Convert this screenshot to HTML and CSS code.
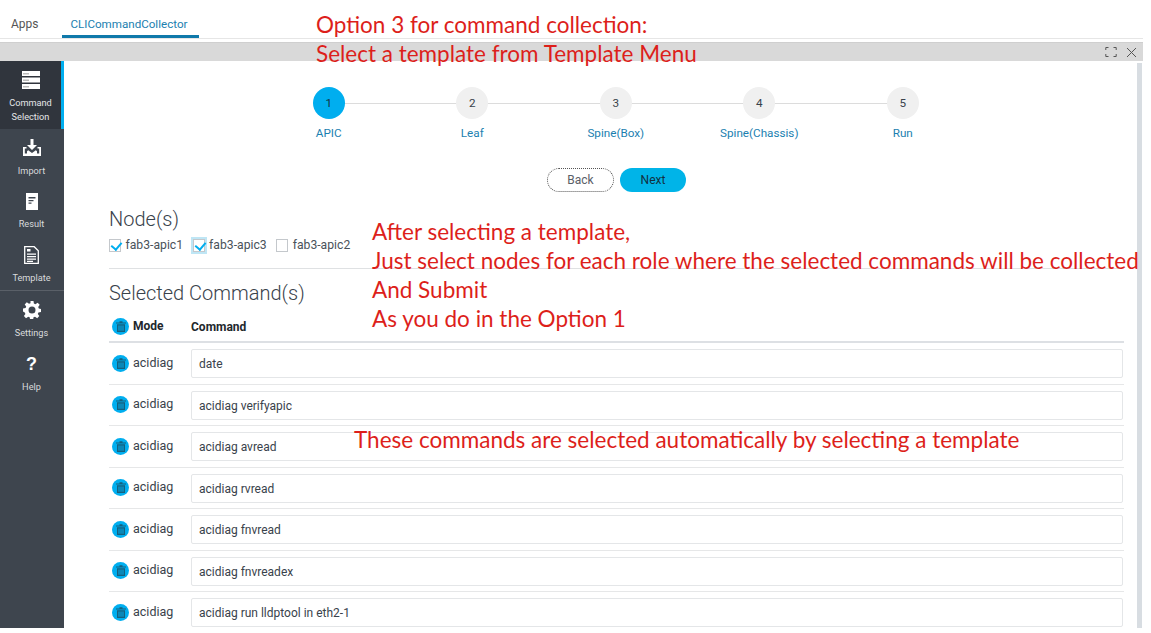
FILE: index.html
```html
<!DOCTYPE html>
<html lang="en">
<head>
<meta charset="utf-8">
<title>CLICommandCollector</title>
<link rel="stylesheet" href="styles.css">
</head>
<body>
<div class="app">
  <nav class="tabs">
    <span class="tab">Apps</span>
    <span class="tab tab-active">CLICommandCollector</span>
  </nav>
  <div class="titlebar">
    <svg class="tb-icon" viewBox="0 0 12 10" width="12" height="10"><path d="M3.5 .5H.8V3M8.5 .5h2.700V3M3.5 9.500H.8V7M8.5 9.500h2.700V7" fill="none" stroke="#555" stroke-width="1"/></svg>
    <svg class="tb-icon" viewBox="0 0 11 11" width="11" height="11"><path d="M1 1l9 9M10 1l-9 9" fill="none" stroke="#555" stroke-width="1"/></svg>
  </div>
  <div class="main">
    <aside class="sidebar">
      <div class="side-item side-active">
        <svg viewBox="0 0 18 18" width="18" height="18"><path fill="#fff" d="M0 0h18v5H0zM0 6.500h18v5H0zM0 13h18v5H0z"/><path fill="#777" d="M1.500 2h1v1.500h-1zM3.500 2h1v1.500h-1zM5.500 2h1v1.500h-1zM1.500 8.500h1V10h-1zM3.500 8.500h1V10h-1zM5.500 8.500h1V10h-1zM1.500 15h1v1.500h-1zM3.500 15h1v1.500h-1zM5.500 15h1v1.500h-1z"/></svg>
        <span>Command<br>Selection</span>
      </div>
      <div class="side-item">
        <svg viewBox="0 0 18 18" width="18" height="18"><path fill="#fff" d="M7.500 0h3v6H14l-5 5-5-5h3.500z"/><path fill="#fff" d="M0 8h3.500v1.500H1.800v5h14.400v-5h-1.700V8H18v9H0z"/><path fill="#fff" d="M4 12.300l1.200-1 3.800 2.700 3.800-2.700 1.200 1V15H4z"/></svg>
        <span>Import</span>
      </div>
      <div class="side-item">
        <svg viewBox="0 0 12 17" width="12" height="17"><path fill="#fff" fill-rule="evenodd" d="M0 0h12v17H0zM2.500 4v1.500h7V4zM2.500 7v1.200h5V7zM2.500 9.500v1.200h3V9.500z"/></svg>
        <span>Result</span>
      </div>
      <div class="side-item side-last">
        <svg viewBox="0 0 15 18" width="15" height="18"><path fill="none" stroke="#fff" stroke-width="1.300" d="M.7.700h9.500l4.100 4.100v12.500H.7z"/><path fill="#fff" d="M3 3h3.500v2.500H3zM3 7.500h9v1.200H3zM3 10h9v1.200H3zM3 12.500h9v1.200H3zM3 14.800h6V16H3z"/></svg>
        <span>Template</span>
      </div>
      <div class="side-item">
        <svg viewBox="0 0 18 18" width="18" height="18"><path fill="#fff" fill-rule="evenodd" d="M7.500 0h3l.4 2.600 1.500.6 2.200-1.500 2.100 2.100-1.500 2.200.6 1.500 2.200.5v3l-2.600.4-.6 1.500 1.500 2.200-2.100 2.100-2.200-1.500-1.500.6-.4 2.600h-3l-.4-2.600-1.500-.6-2.200 1.500-2.100-2.100 1.500-2.200-.6-1.500L0 10.500v-3l2.600-.4.6-1.500L1.700 3.400l2.100-2.100 2.200 1.500 1.500-.6zM9 5.500a3.500 3.500 0 1 0 0 7 3.500 3.500 0 0 0 0-7z"/></svg>
        <span>Settings</span>
      </div>
      <div class="side-item">
        <span class="side-q">?</span>
        <span>Help</span>
      </div>
    </aside>
    <section class="content">
      <ol class="stepper">
        <li class="step step-current"><b>1</b><span>APIC</span></li>
        <li class="step"><b>2</b><span>Leaf</span></li>
        <li class="step"><b>3</b><span>Spine(Box)</span></li>
        <li class="step"><b>4</b><span>Spine(Chassis)</span></li>
        <li class="step"><b>5</b><span>Run</span></li>
      </ol>
      <div class="actions">
        <button class="btn btn-back">Back</button>
        <button class="btn btn-next">Next</button>
      </div>
      <h2 class="heading">Node(s)</h2>
      <div class="nodes">
        <label class="node"><i class="cb cb-on"></i>fab3-apic1</label>
        <label class="node"><i class="cb cb-on cb-focus"></i>fab3-apic3</label>
        <label class="node"><i class="cb"></i>fab3-apic2</label>
      </div>
      <hr class="rule">
      <h2 class="heading heading-sel">Selected Command(s)</h2>
      <div class="thead">
        <span class="mode"><i class="trash"><svg viewBox="0 0 10 11" width="10" height="11"><use href="#bin"/></svg></i><b>Mode</b></span>
        <b class="cmd-h">Command</b>
      </div>
      <div class="row"><span class="mode"><i class="trash"><svg viewBox="0 0 10 11" width="10" height="11"><use href="#bin"/></svg></i>acidiag</span><div class="cmd">date</div></div>
      <div class="row"><span class="mode"><i class="trash"><svg viewBox="0 0 10 11" width="10" height="11"><use href="#bin"/></svg></i>acidiag</span><div class="cmd">acidiag verifyapic</div></div>
      <div class="row"><span class="mode"><i class="trash"><svg viewBox="0 0 10 11" width="10" height="11"><use href="#bin"/></svg></i>acidiag</span><div class="cmd">acidiag avread</div></div>
      <div class="row"><span class="mode"><i class="trash"><svg viewBox="0 0 10 11" width="10" height="11"><use href="#bin"/></svg></i>acidiag</span><div class="cmd">acidiag rvread</div></div>
      <div class="row"><span class="mode"><i class="trash"><svg viewBox="0 0 10 11" width="10" height="11"><use href="#bin"/></svg></i>acidiag</span><div class="cmd">acidiag fnvread</div></div>
      <div class="row"><span class="mode"><i class="trash"><svg viewBox="0 0 10 11" width="10" height="11"><use href="#bin"/></svg></i>acidiag</span><div class="cmd">acidiag fnvreadex</div></div>
      <div class="row"><span class="mode"><i class="trash"><svg viewBox="0 0 10 11" width="10" height="11"><use href="#bin"/></svg></i>acidiag</span><div class="cmd">acidiag run lldptool in eth2-1</div></div>
    </section>
    <div class="scrollbar"></div>
  </div>
</div>
<svg class="defs" width="0" height="0"><symbol id="bin" viewBox="0 0 10 11"><path fill="#15607f" fill-rule="evenodd" d="M0 1.500h3.500V.3h3v1.200H10v.9H0zM1 3.200h8V11H1zM2.500 4.400v5.400h1V4.400zM4.500 4.400v5.400h1V4.400zM6.500 4.400v5.400h1V4.400z"/></symbol></svg>
<div class="note note-top">Option 3 for command collection:<br>Select a template from Template Menu</div>
<div class="note note-mid">After selecting a template,<br>Just select nodes for each role where the selected commands will be collected<br>And Submit<br>As you do in the Option 1</div>
<div class="note note-auto">These commands are selected automatically by selecting a template</div>
</body>
</html>
```
FILE: styles.css
```css
* { box-sizing: border-box; }
html, body { margin: 0; height: 633px; overflow: hidden; background: #fff; }
body { font-family: "Inter", "Liberation Sans", sans-serif; font-size: 12px; color: #39424b; position: relative; }
.app { width: 1143px; height: 628px; display: flex; flex-direction: column; overflow: hidden; }
.tabs { height: 39px; flex: none; display: flex; border-bottom: 1px solid #e6e6e6; }
.tab { height: 38px; line-height: 49px; padding: 0 11px; font-family: "Roboto", sans-serif; font-size: 12px; color: #555; }
.tab-active { margin-left: 12px; padding: 0 0 0 9px; width: 137px; font-size: 11.600px; color: #1b7fb0; border-bottom: 3px solid #0f79aa; }
.titlebar { height: 19px; margin-top: 3px; flex: none; background: #d9d9d9; border-top: 1px solid #cfcfcf; display: flex; justify-content: flex-end; align-items: center; gap: 9px; padding-right: 6px; }
.main { flex: 1; display: flex; min-height: 0; }
.sidebar { width: 64px; flex: none; background: #3e454e; color: #d8dadc; font-family: "Roboto", sans-serif; font-size: 9.200px; text-align: center; }
.side-item { height: 53.500px; padding: 10px 1px 0 0; display: flex; flex-direction: column; align-items: center; gap: 7px; line-height: 13.500px; }
.side-active { height: 68px; background: #30353d; border-right: 3px solid #00aeef; padding: 10px 0 0 0; gap: 7px; color: #e4e5e7; }
.side-last { border-bottom: 1px solid #5a6068; height: 55px; }
.side-q { height: 18px; font: 700 18px/18px "Liberation Sans", sans-serif; color: #fff; }
.content { flex: 1; min-width: 0; padding: 0 13px 0 45px; }
.stepper { list-style: none; margin: 26px 0 0 148px; padding: 0; display: flex; width: 718px; height: 56px; }
.step { width: 143.500px; flex: none; display: flex; flex-direction: column; align-items: center; gap: 7px; position: relative; color: #1b7fb0; font-family: "Roboto", sans-serif; font-size: 11.700px; }
.step::after { content: ""; position: absolute; top: 16px; left: 50%; width: 100%; height: 1px; background: #dcdcdc; }
.step:last-child::after { display: none; }
.step b { width: 32px; height: 32px; border-radius: 50%; background: #f0f0f0; color: #39424b; font-weight: 400; line-height: 32px; text-align: center; position: relative; z-index: 1; }
.step-current b { background: #00aeef; color: #12303f; }
.actions { display: flex; justify-content: flex-start; gap: 6px; margin: 25px 0 0 438px; }
.btn { height: 24px; border-radius: 12px; font-family: "Roboto", sans-serif; font-size: 12px; padding: 0; }
.btn-back { width: 67px; background: #fff; border: 1px dotted #555; color: #5a6068; }
.btn-next { width: 66px; background: #00b4e8; border: 0; color: #12303f; }
.heading { margin: 15px 0 0; font-family: "Roboto", sans-serif; font-weight: 300; font-size: 20px; line-height: 24px; color: #39424b; }
.nodes { display: flex; margin-top: 6px; height: 16px; align-items: center; font-family: "Roboto", sans-serif; font-size: 12.200px; color: #4a525a; }
.node { display: flex; align-items: center; gap: 4.500px; margin-right: 9.500px; }
.cb { width: 12px; height: 13px; border: 1px solid #c4c8cc; background: #fff; display: block; position: relative; }
.cb-on::after { content: ""; position: absolute; left: 3px; top: 0; width: 5px; height: 8px; border: solid #00aeef; border-width: 0 2px 2px 0; transform: rotate(40deg); }
.cb-focus { outline: 2px solid #bfe6f5; }
.rule { border: 0; border-top: 1px solid #dfe1e3; margin: 15px 13px 0 0; width: 1015px; }
.heading-sel { margin-top: 12px; }
.thead { display: flex; align-items: center; height: 29px; margin-top: 9px; border-bottom: 2px solid #dde0e4; width: 1015px; padding-bottom: 4px; }
.mode { width: 82px; flex: none; display: flex; align-items: center; gap: 4px; padding-left: 3px; font-family: "Roboto", sans-serif; font-size: 12.500px; color: #39424b; }
.thead b { color: #22272c; font-weight: 700; font-family: "Roboto", sans-serif; font-size: 12px; }
.cmd-h { padding-top: 2px; }
.trash { width: 17px; height: 17px; flex: none; margin-top: 2px; border-radius: 50%; background: #00aeef; display: flex; align-items: center; justify-content: center; }
.row { display: flex; height: 41.500px; padding-top: 6px; align-items: flex-start; border-bottom: 1px solid #e6e7e8; width: 1015px; }
.row:last-child { border-bottom: 0; }
.row .mode { height: 28px; padding-bottom: 2px; }
.cmd { width: 932px; height: 29px; border: 1px solid #e4e6e8; border-radius: 2px; padding: 0 7px; line-height: 28px; font-family: "Roboto", sans-serif; font-size: 12px; color: #39424b; background: #fff; }
.scrollbar { width: 5px; flex: none; margin-right: 1px; margin-top: 2px; background: #d8dde2; }
.defs { position: absolute; }
.note { position: absolute; font-family: "Lato", sans-serif; font-size: 22.500px; line-height: 29px; color: #dd1f1b; white-space: nowrap; }
.note-top { left: 316px; top: 10px; }
.note-mid { left: 372px; top: 217px; }
.note-auto { left: 354px; top: 425px; }
```
